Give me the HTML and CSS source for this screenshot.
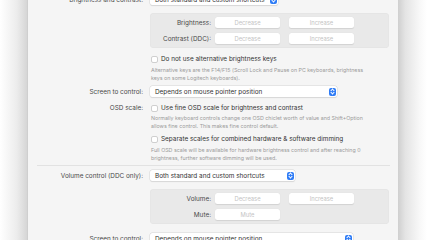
FILE: index.html
```html
<!DOCTYPE html>
<html>
<head>
    <title>Keyboard settings</title>
    <link rel="stylesheet" href="styles.css">
</head>
<body>
    <div class="page">
        <div class="edge edge-left"></div>

        <div class="panel">
            <div class="content">
                <div class="row">
                    <div class="label">Brightness and contrast:</div>
                    <div class="popup popup-short">
                        <span>Both standard and custom shortcuts</span>
                        <span class="stepper"></span>
                    </div>
                </div>

                <div class="group">
                    <div class="group-row">
                        <div class="group-label">Brightness:</div>
                        <div class="key-button">Decrease</div>
                        <div class="key-button">Increase</div>
                    </div>
                    <div class="group-row">
                        <div class="group-label">Contrast (DDC):</div>
                        <div class="key-button">Decrease</div>
                        <div class="key-button">Increase</div>
                    </div>
                </div>

                <div class="row check-row first-check">
                    <div class="label"></div>
                    <span class="checkbox"></span>
                    <span class="check-text">Do not use alternative brightness keys</span>
                </div>
                <div class="help help-first">
                    Alternative keys are the F14/F15 (Scroll Lock and Pause on PC keyboards, brightness<br>
                    keys on some Logitech keyboards).
                </div>

                <div class="row screen-row">
                    <div class="label">Screen to control:</div>
                    <div class="popup popup-wide">
                        <span>Depends on mouse pointer position</span>
                        <span class="stepper"></span>
                    </div>
                </div>

                <div class="row check-row osd-row">
                    <div class="label">OSD scale:</div>
                    <span class="checkbox"></span>
                    <span class="check-text">Use fine OSD scale for brightness and contrast</span>
                </div>
                <div class="help help-osd">
                    Normally keyboard controls change one OSD chiclet worth of value and Shift+Option<br>
                    allows fine control. This makes fine control default.
                </div>

                <div class="row check-row separate-row">
                    <div class="label"></div>
                    <span class="checkbox"></span>
                    <span class="check-text">Separate scales for combined hardware &amp; software dimming</span>
                </div>
                <div class="help help-first">
                    Full OSD scale will be available for hardware brightness control and after reaching 0<br>
                    brightness, further software dimming will be used.
                </div>

                <div class="separator"></div>

                <div class="row volume-row">
                    <div class="label">Volume control (DDC only):</div>
                    <div class="popup popup-mid">
                        <span>Both standard and custom shortcuts</span>
                        <span class="stepper"></span>
                    </div>
                </div>

                <div class="group">
                    <div class="group-row">
                        <div class="group-label">Volume:</div>
                        <div class="key-button">Decrease</div>
                        <div class="key-button">Increase</div>
                    </div>
                    <div class="group-row">
                        <div class="group-label">Mute:</div>
                        <div class="key-button">Mute</div>
                    </div>
                </div>

                <div class="row last-row">
                    <div class="label">Screen to control:</div>
                    <div class="popup popup-last">
                        <span>Depends on mouse pointer position</span>
                        <span class="stepper"></span>
                    </div>
                </div>
            </div>
        </div>

        <div class="edge edge-right"></div>
    </div>
</body>
</html>
```

FILE: styles.css
```css
body {
    margin: 0;
    background-color: #fff;
    font-family: Inter, "Noto Sans", sans-serif;
    color: #3a3a3a;
    overflow: hidden;
}
.page {
    display: flex;
    height: 240px;
    overflow: hidden;
}
.edge {
    flex: none;
}
.edge-left {
    width: 28px;
    background: linear-gradient(to right, #fff 0%, #ececec 60%, #d6d6d6 96%, #c9c9c9 100%);
}
.edge-right {
    width: 29px;
    background: linear-gradient(to right, #cfcfcf 0%, #e4e4e4 25%, #f8f8f8 75%, #fff 100%);
}
.panel {
    width: 370px;
    flex: none;
    background-color: #f5f5f5;
}
.content {
    margin-top: -6px;
}
.row {
    display: flex;
    align-items: center;
}
.label {
    width: 115px;
    padding-right: 7px;
    flex: none;
    text-align: right;
    font-size: 6.4px;
    color: #4a4a4a;
}
.popup {
    height: 11px;
    box-sizing: border-box;
    display: flex;
    align-items: center;
    justify-content: space-between;
    padding: 0 1px 0 5px;
    background-color: #fff;
    border-radius: 2.5px;
    box-shadow: 0 0 0 0.5px #d8d8d8, 0 0.5px 1px rgba(0, 0, 0, 0.12);
    font-size: 6.4px;
    color: #333;
}
.popup-short { width: 128px; }
.popup-wide { width: 187px; }
.popup-mid { width: 145px; }
.popup-last { width: 203px; }
.stepper {
    width: 7px;
    height: 8px;
    border-radius: 2px;
    background-color: #2f7cf6;
    position: relative;
}
.stepper::before,
.stepper::after {
    content: "";
    position: absolute;
    left: 2px;
    width: 2px;
    height: 2px;
    border-left: 1px solid #fff;
    border-top: 1px solid #fff;
}
.stepper::before {
    top: 1.6px;
    transform: rotate(45deg);
}
.stepper::after {
    top: 3.6px;
    transform: rotate(225deg);
}
.group {
    margin: 8px 0 0 122px;
    width: 239px;
    height: 35px;
    box-sizing: border-box;
    padding-top: 4px;
    background-color: #e9e9e9;
    border-radius: 4px;
    box-shadow: inset 0 0 0 0.5px #e2e2e2;
}
.group-row {
    display: flex;
    align-items: center;
    height: 11px;
    margin-bottom: 5px;
}
.group-label {
    width: 61px;
    padding-right: 4px;
    flex: none;
    text-align: right;
    font-size: 6.4px;
    color: #4a4a4a;
}
.key-button {
    width: 65px;
    height: 11px;
    margin-right: 9px;
    display: flex;
    align-items: center;
    justify-content: center;
    background-color: #fff;
    border-radius: 2.5px;
    box-shadow: 0 0.5px 1px rgba(0, 0, 0, 0.1);
    font-size: 5.8px;
    color: #c4c4c4;
}
.check-row {
    height: 8px;
}
.first-check {
    margin-top: 7px;
}
.osd-row {
    margin-top: 7px;
}
.separate-row {
    margin-top: 5px;
}
.checkbox {
    width: 7px;
    height: 7px;
    box-sizing: border-box;
    margin-left: 1px;
    margin-right: 3px;
    flex: none;
    background-color: #fff;
    border: 0.5px solid #cfcfcf;
    border-radius: 2px;
}
.check-text {
    font-size: 6.4px;
    color: #333;
    white-space: nowrap;
}
.help {
    margin-left: 123px;
    font-size: 5.3px;
    line-height: 8px;
    color: #9b9b9b;
    white-space: nowrap;
}
.help-first {
    margin-top: 3px;
}
.help-osd {
    margin-top: 2px;
}
.screen-row {
    margin-top: 4px;
}
.separator {
    margin: 3px 8px 0 9px;
    height: 1px;
    background-color: #e2e2e2;
}
.volume-row {
    margin-top: 4px;
}
.last-row {
    margin-top: 9px;
}
```
